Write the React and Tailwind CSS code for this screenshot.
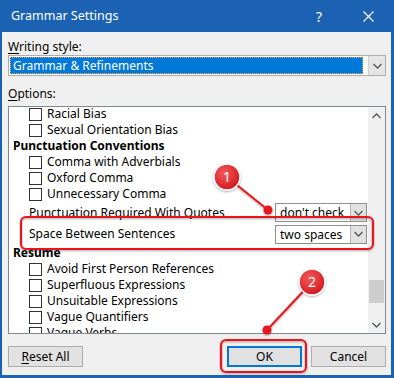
import React from 'react';

const Chevron = ({ up = false, className = '' }) => (
  <svg width="9" height="6" viewBox="0 0 9 6" className={className}>
    <path
      d={up ? 'M0.5 5 L4.5 1 L8.5 5' : 'M0.5 1 L4.5 5 L8.5 1'}
      fill="none"
      stroke="#555"
      strokeWidth="1.3"
    />
  </svg>
);

const Check = ({ label }) => (
  <div className="h-[16px] shrink-0 flex items-center pl-[20px]">
    <div className="w-[13px] h-[13px] border border-[#333] bg-white shrink-0" />
    <span className="ml-[5px] whitespace-nowrap">{label}</span>
  </div>
);

const Header = ({ label }) => (
  <div className="h-[16px] shrink-0 flex items-center pl-[4px] font-bold whitespace-nowrap">{label}</div>
);

const Combo = ({ value }) => (
  <div className="w-[92px] h-[19px] border border-[#8f8f8f] bg-white flex items-stretch">
    <span className="flex-1 pl-[4px] leading-[17px] whitespace-nowrap">{value}</span>
    <div className="w-[16px] bg-[#e1e1e1] border-l border-[#b5b5b5] flex items-center justify-center">
      <Chevron />
    </div>
  </div>
);

const ComboRow = ({ label, value, h }) => (
  <div className={`${h} shrink-0 flex items-center justify-between pl-[20px] pr-[1px]`}>
    <span className="whitespace-nowrap">{label}</span>
    <Combo value={value} />
  </div>
);

const Button = ({ children, focused = false }) => (
  <div
    className={`w-[75px] h-[21px] flex items-center justify-center bg-[#e1e1e1] ${
      focused ? 'border-2 border-[#0078d7]' : 'border border-[#adadad]'
    }`}
  >
    {children}
  </div>
);

const Annotations = () => (
  <svg className="absolute inset-0 pointer-events-none" width="394" height="378">
    <defs>
      <filter id="sh" x="-20%" y="-20%" width="140%" height="140%">
        <feDropShadow dx="0" dy="1" stdDeviation="1.2" floodColor="#000" floodOpacity="0.35" />
      </filter>
      <radialGradient id="rg" cx="40%" cy="35%" r="70%">
        <stop offset="0%" stopColor="#f45a5a" />
        <stop offset="100%" stopColor="#d2141c" />
      </radialGradient>
    </defs>
    <g filter="url(#sh)">
      <rect x="21" y="217" width="352" height="32" rx="5" fill="none" stroke="#e8151f" strokeWidth="2" />
      <rect x="221" y="340" width="85" height="32" rx="5" fill="none" stroke="#e8151f" strokeWidth="2" />
      <line x1="227" y1="177" x2="268" y2="210" stroke="#e8151f" strokeWidth="2" />
      <circle cx="268" cy="210" r="4.5" fill="#e8151f" />
      <line x1="312" y1="282" x2="267" y2="330" stroke="#e8151f" strokeWidth="2" />
      <circle cx="267" cy="330" r="4.5" fill="#e8151f" />
      <circle cx="227" cy="177" r="13" fill="url(#rg)" stroke="#fff" strokeWidth="1.5" />
      <circle cx="312" cy="282" r="13" fill="url(#rg)" stroke="#fff" strokeWidth="1.5" />
    </g>
    <text x="227" y="182" textAnchor="middle" fill="#fff" fontSize="14" fontFamily="Noto Sans, sans-serif">1</text>
    <text x="312" y="287" textAnchor="middle" fill="#fff" fontSize="14" fontFamily="Noto Sans, sans-serif">2</text>
  </svg>
);

const App = () => {
  return (
    <div className="relative w-[394px] h-[378px] bg-[#1b63b2] flex flex-col [font-family:'Noto_Sans',sans-serif] text-[12px] text-black overflow-hidden">
      {/* Title bar */}
      <div className="h-[32px] shrink-0 flex items-center pl-[11px] text-white text-[12.5px]">
        <span className="flex-1">Grammar Settings</span>
        <span className="w-[10px] text-[14px] mr-[37px]">?</span>
        <svg width="11" height="11" viewBox="0 0 11 11" className="mr-[20px]">
          <path d="M0.5 0.5 L10.5 10.5 M10.5 0.5 L0.5 10.5" stroke="#fff" strokeWidth="1.2" />
        </svg>
      </div>

      {/* Body */}
      <div className="flex-1 ml-[2px] mr-[3px] mb-[3px] bg-[#f0f0f0] flex flex-col pl-[6px] pr-[5px] pt-[7px]">
        <div className="h-[16px] leading-[16px]">
          <span className="underline underline-offset-2">W</span>riting style:
        </div>
        <div className="h-[21px] border border-[#adadad] bg-white flex items-stretch">
          <div className="flex-1 m-[1px] mr-[5px] bg-[#0078d7] text-white leading-[15px] pl-[2px] border border-dotted border-[#f0a040]">
            Grammar &amp; Refinements
          </div>
          <div className="w-[17px] bg-[#e5e5e5] border-l border-[#cfcfcf] flex items-center justify-center">
            <Chevron />
          </div>
        </div>

        <div className="h-[16px] leading-[16px] mt-[10px]">
          <span className="underline underline-offset-2">O</span>ptions:
        </div>

        {/* List box */}
        <div className="mt-[4px] h-[228px] border border-[#828790] bg-white flex overflow-hidden">
          <div className="flex-1 flex flex-col -mt-[1px] overflow-hidden">
            <Check label="Racial Bias" />
            <Check label="Sexual Orientation Bias" />
            <Header label="Punctuation Conventions" />
            <Check label="Comma with Adverbials" />
            <Check label="Oxford Comma" />
            <Check label="Unnecessary Comma" />
            <ComboRow label="Punctuation Required With Quotes" value="don't check" h="h-[21px]" />
            <ComboRow label="Space Between Sentences" value="two spaces" h="h-[22px]" />
            <Header label="Resume" />
            <Check label="Avoid First Person References" />
            <Check label="Superfluous Expressions" />
            <Check label="Unsuitable Expressions" />
            <Check label="Vague Quantifiers" />
            <Check label="Vague Verbs" />
          </div>
          {/* Scrollbar */}
          <div className="w-[17px] bg-[#f0f0f0] flex flex-col">
            <div className="h-[17px] flex items-center justify-center">
              <Chevron up />
            </div>
            <div className="mt-[156px] mx-[1px] h-[23px] bg-[#cdcdcd]" />
            <div className="flex-1" />
            <div className="h-[17px] flex items-center justify-center">
              <Chevron />
            </div>
          </div>
        </div>

        {/* Buttons */}
        <div className="mt-[12px] flex items-center">
          <Button>
            <span>
              <span className="underline underline-offset-2">R</span>eset All
            </span>
          </Button>
          <div className="flex-1" />
          <Button focused>OK</Button>
          <div className="w-[9px]" />
          <Button>Cancel</Button>
        </div>
      </div>

      <Annotations />
    </div>
  );
};

export default App;
